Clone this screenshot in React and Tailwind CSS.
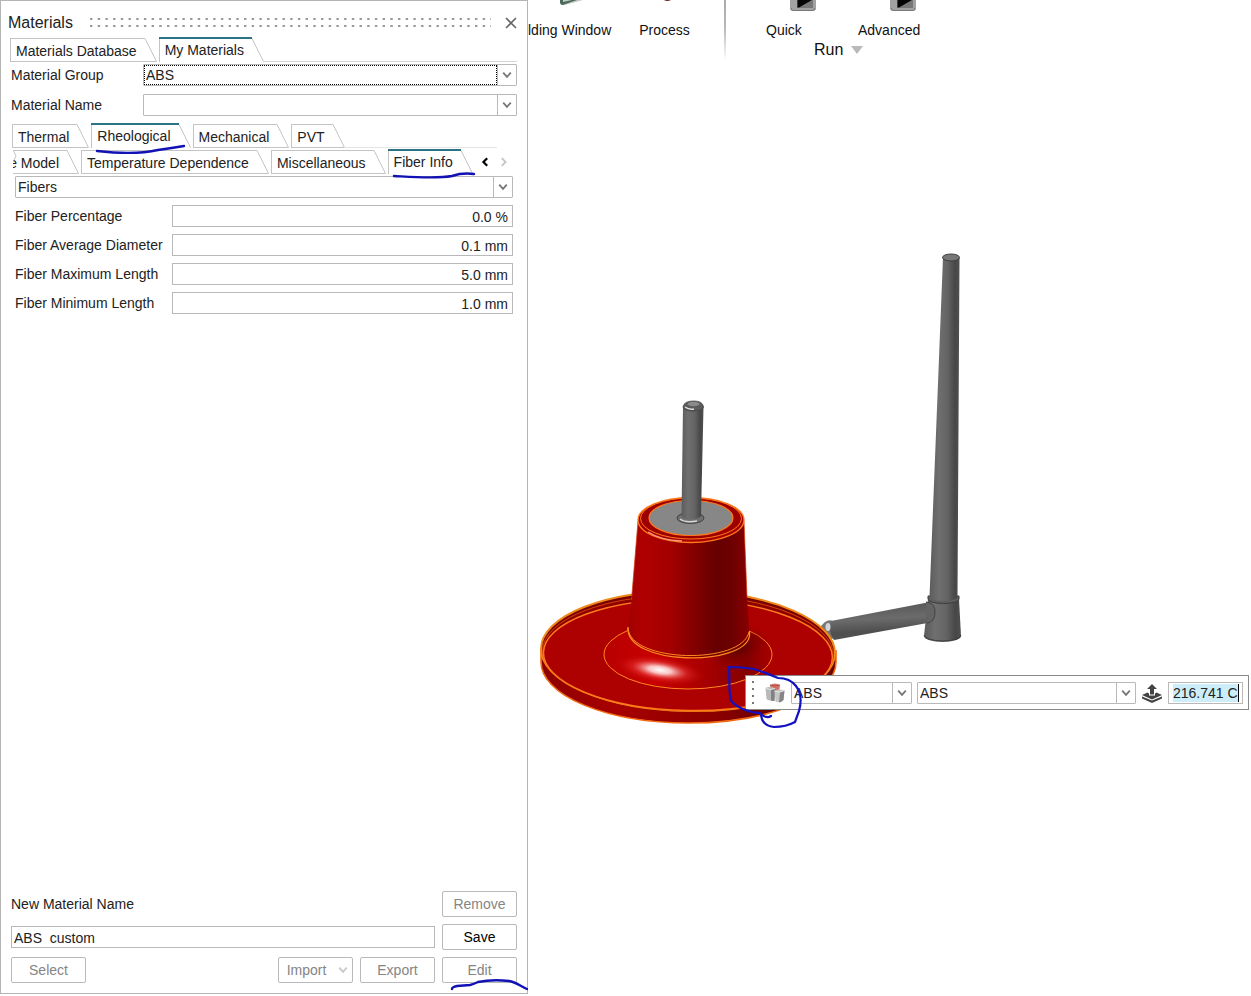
import React from 'react';
import clsx from 'clsx';

const Chevron = ({ className }) => (
  <svg viewBox="0 0 10 8" className={clsx('w-[10px] h-2', className)} fill="none" stroke="currentColor" strokeWidth="1.8">
    <path d="M1.2 1.6 L5 5.8 L8.8 1.6" />
  </svg>
);

const Combo = ({ id, label, value, focused, className }) => (
  <div className={clsx('flex h-[22px] border border-[#b9b9b9] rounded-[1px] bg-white', className)}>
    <select
      id={id}
      aria-label={label}
      defaultValue={value}
      className={clsx(
        'appearance-none flex-1 min-w-0 h-full outline-none bg-white',
        focused ? 'border border-dotted border-black pl-px leading-[18px]' : 'pl-[2px] leading-5'
      )}
    >
      <option>{value}</option>
    </select>
    <span className="w-[19px] border-l border-[#b9b9b9] flex items-center justify-center text-[#777]">
      <Chevron />
    </span>
  </div>
);

const Tab = ({ label, active, cut }) => (
  <button role="tab" aria-selected={!!active} className="flex items-end h-[25px] mr-[2px] whitespace-nowrap">
    <span
      className={clsx(
        'block pr-2',
        active ? 'h-[25px] border-t-2 border-[#2a7486]' : 'h-6 leading-[25px] border-t border-b border-[#c4c4c4]'
      )}
    >
      <span
        className={clsx(
          'block h-full',
          active && 'leading-[22px]',
          !cut && 'pl-[5px] border-l border-[#c4c4c4]'
        )}
      >
        {label}
      </span>
    </span>
    <svg viewBox="0 0 12 24" className="w-3 h-6" fill="none" stroke="#c4c4c4">
      <path d={active ? 'M0 0.5 L11.5 23.5' : 'M0 0.5 L11.5 23.5 H0'} />
    </svg>
  </button>
);

const NumberField = ({ id, label, value }) => (
  <div className="flex items-center h-[22px]">
    <label htmlFor={id} className="w-[157px] shrink-0 whitespace-nowrap">{label}</label>
    <input
      id={id}
      defaultValue={value}
      className="flex-1 min-w-0 h-[22px] border border-[#b9b9b9] text-right px-1 pt-[2px] outline-none"
    />
  </div>
);

const PanelButton = ({ children, disabled }) => (
  <button
    disabled={disabled}
    className={clsx(
      'w-[75px] h-[26px] border border-[#b9b9b9] rounded-[2px] bg-white flex items-center justify-center',
      disabled ? 'text-[#858585]' : 'text-black'
    )}
  >
    {children}
  </button>
);

const fiberFields = [
  { id: 'fiber-percentage', label: 'Fiber Percentage', value: '0.0 %' },
  { id: 'fiber-diameter', label: 'Fiber Average Diameter', value: '0.1 mm' },
  { id: 'fiber-max', label: 'Fiber Maximum Length', value: '5.0 mm' },
  { id: 'fiber-min', label: 'Fiber Minimum Length', value: '1.0 mm' },
];

const MaterialsPanel = () => (
  <aside className="relative w-[528px] shrink-0 flex flex-col border border-[#b5b5b5] px-[10px] pb-[10px] bg-white">
    <header className="flex items-center h-[36px] pt-[7px] -ml-[3px]">
      <h1 className="text-base w-[82px]">Materials</h1>
      <svg className="w-[401px] h-[10px]" stroke="#999" strokeWidth="2" strokeDasharray="2.4 5.3">
        <line x1="0" y1="1" x2="401" y2="1" />
        <line x1="0" y1="8" x2="401" y2="8" />
      </svg>
      <button aria-label="Close" className="ml-auto">
        <svg viewBox="0 0 12 12" className="w-3 h-3" stroke="#666" strokeWidth="1.6">
          <path d="M1 1 L11 11 M11 1 L1 11" />
        </svg>
      </button>
    </header>

    <div role="tablist" className="flex -ml-px">
      <Tab label="Materials Database" />
      <Tab label="My Materials" active />
      <span className="flex-1 -ml-[3px] border-b border-[#d8d8d8]" />
    </div>

    <div className="flex items-center mt-[2px]">
      <label htmlFor="material-group" className="w-[132px]">Material Group</label>
      <Combo id="material-group" value="ABS" focused className="flex-1" />
    </div>
    <div className="flex items-center mt-2">
      <label htmlFor="material-name" className="w-[132px]">Material Name</label>
      <Combo id="material-name" value="" className="flex-1" />
    </div>

    <div role="tablist" className="flex mt-[7px] ml-px mr-5">
      <Tab label="Thermal" />
      <Tab label="Rheological" active />
      <Tab label="Mechanical" />
      <Tab label="PVT" />
      <span className="flex-1 -ml-[3px] border-b border-[#e4e4e4]" />
    </div>
    <div className="relative flex items-center mt-px ml-[2px]">
      <div role="tablist" className="flex overflow-hidden">
        <div className="w-[68px] flex justify-end overflow-hidden">
          <Tab label="e Model" cut />
        </div>
        <Tab label="Temperature Dependence" />
        <Tab label="Miscellaneous" />
        <Tab label="Fiber Info" active />
      </div>
      {/* torn edge of the scrolled tab strip */}
      <svg viewBox="0 0 4 24" className="absolute left-0 top-px w-1 h-6" fill="none" stroke="#c4c4c4">
        <path d="M0 0 L3 6 L0 12" />
      </svg>
      <button aria-label="Scroll tabs left" className="ml-[6px] text-black">
        <svg viewBox="0 0 8 10" className="w-2 h-[10px]" fill="none" stroke="currentColor" strokeWidth="2.2">
          <path d="M6.2 1.2 L2.4 5 L6.2 8.8" />
        </svg>
      </button>
      <button aria-label="Scroll tabs right" className="ml-[11px] text-[#c4c4c4]">
        <svg viewBox="0 0 8 10" className="w-2 h-[10px]" fill="none" stroke="currentColor" strokeWidth="1.8">
          <path d="M1.8 1.2 L5.6 5 L1.8 8.8" />
        </svg>
      </button>
    </div>

    <div className="mx-1 mt-[2px]">
      <Combo label="Fiber model" value="Fibers" />
      <div className="flex flex-col gap-[7px] mt-[7px]">
        {fiberFields.map((field) => (
          <NumberField key={field.id} {...field} />
        ))}
      </div>
    </div>

    <footer className="mt-auto flex flex-col gap-[7px]">
      <div className="flex items-center justify-between">
        <label htmlFor="new-name">New Material Name</label>
        <PanelButton disabled>Remove</PanelButton>
      </div>
      <div className="flex items-center gap-[7px]">
        <input
          id="new-name"
          defaultValue="ABS&nbsp; custom"
          className="flex-1 min-w-0 h-[22px] border border-[#b9b9b9] px-[2px] pt-[2px] outline-none"
        />
        <PanelButton>Save</PanelButton>
      </div>
      <div className="flex gap-[7px]">
        <PanelButton disabled>Select</PanelButton>
        <span className="flex-1" />
        <PanelButton disabled>
          Import
          <Chevron className="ml-3 -mr-1 text-[#c8c8c8]" />
        </PanelButton>
        <PanelButton disabled>Export</PanelButton>
        <PanelButton disabled>Edit</PanelButton>
      </div>
    </footer>

    {/* pen marks */}
    <svg
      className="absolute -left-px -top-px w-[528px] h-[200px] pointer-events-none"
      fill="none" stroke="#1212b4" strokeWidth="2.4" strokeLinecap="round"
    >
      <path d="M97 151 C115 153 140 154 158 150 Q172 148 184 146" />
      <path d="M394 176 C412 177 436 179 452 176 C461 173 466 173 474 174" />
    </svg>
    <svg
      viewBox="450 975 78 19"
      className="absolute -right-px -bottom-px w-[78px] h-[19px] pointer-events-none"
      fill="none" stroke="#1212b4" strokeWidth="2.4" strokeLinecap="round"
    >
      <path d="M452 989 Q452 987 457 986 L470 985 Q474 984 478 982 C488 980 500 980 509 981 C516 982 520 986 527 989" />
    </svg>
  </aside>
);

const RunIcon = ({ className }) => (
  <svg viewBox="0 0 26 12" className={clsx('w-[26px] h-3', className)}>
    <path d="M0 0 H26 V8 Q26 11 23 11 H3 Q0 11 0 8 Z" fill="#a2a2a2" />
    <path d="M1 8 Q1 10.500 4 10.500 H22 Q25 10.500 25 8" fill="none" stroke="#777" />
    <path d="M7 0 H23 V8 H7 Z" fill="#777" />
    <path d="M7.500 0 H22 L9 7.500 H7.500 Z" fill="#050505" />
  </svg>
);

const Ribbon = () => (
  <nav className="flex h-[60px] text-[#111]">
    <div className="flex items-start w-[196px] gap-7">
      <button className="flex flex-col items-center whitespace-nowrap">
        <svg viewBox="0 0 30 12" className="w-[30px] h-3">
          <path d="M7 0 H28 L10 5 Q7 5 7 3 Z" fill="#c5cbc8" />
          <path d="M5 0 H8 V2 L17 0 H22 L9 4.500 Q6 6 5 3 Z" fill="#4a6a5c" />
        </svg>
        <span className="mt-2 leading-5">lding Window</span>
      </button>
      <button className="flex flex-col items-center">
        <svg viewBox="0 0 12 12" className="w-3 h-3">
          <path d="M5 0 H12 Q8 2 5 0 Z" fill="#702020" />
        </svg>
        <span className="mt-2 leading-5">Process</span>
      </button>
    </div>
    <span className="w-[2px] bg-gradient-to-b from-[#aaa] via-[#bbb] to-white" />
    <div className="pl-10">
      <div className="flex gap-[42px]">
        <button className="flex flex-col items-start w-[50px]">
          <RunIcon className="self-end" />
          <span className="mt-2 leading-5">Quick</span>
        </button>
        <button className="flex flex-col items-start">
          <RunIcon className="self-end mr-1" />
          <span className="mt-2 leading-5">Advanced</span>
        </button>
      </div>
      <button className="flex items-center gap-2 ml-12 text-base leading-5">
        Run
        <svg viewBox="0 0 12 8" className="w-3 h-2" fill="#b9b9b9">
          <path d="M0 0 H12 L6 8 Z" />
        </svg>
      </button>
    </div>
  </nav>
);

const PartModel = () => (
  <svg viewBox="528 60 723 760" className="block w-[723px] h-[760px]">
    <defs>
      <linearGradient id="cone">
        <stop offset="0" stopColor="#a00000" />
        <stop offset="0.12" stopColor="#b00000" />
        <stop offset="0.35" stopColor="#a30000" />
        <stop offset="0.55" stopColor="#820000" />
        <stop offset="0.72" stopColor="#680000" />
        <stop offset="0.85" stopColor="#6c0000" />
        <stop offset="1" stopColor="#8a0000" />
      </linearGradient>
      <linearGradient id="side">
        <stop offset="0" stopColor="#8d0000" />
        <stop offset="0.25" stopColor="#a80000" />
        <stop offset="0.6" stopColor="#8a0000" />
        <stop offset="0.8" stopColor="#680000" />
        <stop offset="1" stopColor="#6a0000" />
      </linearGradient>
      <linearGradient id="fillet">
        <stop offset="0" stopColor="#b80000" />
        <stop offset="0.3" stopColor="#c80000" />
        <stop offset="0.6" stopColor="#a80000" />
        <stop offset="0.85" stopColor="#850000" />
        <stop offset="1" stopColor="#a80000" />
      </linearGradient>
      <radialGradient id="shine">
        <stop offset="0" stopColor="#fff" />
        <stop offset="0.25" stopColor="#ffd8d8" stopOpacity="0.9" />
        <stop offset="0.6" stopColor="#f04040" stopOpacity="0.45" />
        <stop offset="1" stopColor="#c40000" stopOpacity="0" />
      </radialGradient>
      <radialGradient id="shade">
        <stop offset="0" stopColor="#500000" stopOpacity="0.85" />
        <stop offset="1" stopColor="#800000" stopOpacity="0" />
      </radialGradient>
      <linearGradient id="steel">
        <stop offset="0" stopColor="#5c5c5c" />
        <stop offset="0.3" stopColor="#6f6f6f" />
        <stop offset="0.6" stopColor="#646464" />
        <stop offset="0.85" stopColor="#474747" />
        <stop offset="1" stopColor="#505050" />
      </linearGradient>
      <linearGradient id="runner" x1="0" y1="0" x2="0.15" y2="1">
        <stop offset="0.2" stopColor="#5c5c5c" />
        <stop offset="0.5" stopColor="#6b6b6b" />
        <stop offset="0.8" stopColor="#505050" />
      </linearGradient>
    </defs>

    {/* runner and sprue */}
    <path d="M820 628 Q826 618 833 621 L836 638 L826 640 Z" fill="#777" />
    <path d="M831 621 L930 602 L933 622 L834 640 Q827 630 831 621 Z" fill="url(#runner)" />
    <ellipse cx="828" cy="627" rx="2.500" ry="4" fill="#d2d6da" />
    <path d="M928 599 L924 636 A18.500 6 0 0 0 961 636 L959 599 Z" fill="url(#steel)" />
    <path d="M924 635 A18.500 6 0 0 0 961 635" fill="none" stroke="#3e3e3e" />
    <path d="M928 596 V599 A15.500 4.500 0 0 0 959 599 V596 Z" fill="#5f5f5f" stroke="#3c3c3c" />
    <path d="M943 257 L929.500 597 A14 4 0 0 0 957.500 597 L959.500 257 Z" fill="url(#steel)" />
    <path d="M926 602 Q936 603 935 613 Q935 622 927 623" fill="#646464" stroke="#444" />
    <ellipse cx="951" cy="257.500" rx="8.500" ry="3.500" fill="#777" stroke="#3f3f3f" />

    {/* disc */}
    <path d="M541 648 V662 A147.500 61 0 0 0 836 662 V652 Z" fill="url(#side)" />
    <path d="M541 648 V662 A147.500 61 0 0 0 836 662 V650" fill="none" stroke="#f26a12" strokeWidth="1.600" />
    <g transform="rotate(1 688 651)">
      <ellipse cx="688" cy="651" rx="147" ry="60" fill="#790000" stroke="#ef8a18" strokeWidth="2" />
      <ellipse cx="688" cy="653" rx="145.500" ry="58" fill="#8c0000" stroke="#e8500c" strokeWidth="0.800" />
      <ellipse cx="688" cy="655" rx="144.500" ry="55.500" fill="#ad0000" stroke="#ff7a1c" strokeWidth="1.500" />
    </g>
    <ellipse cx="688" cy="654.500" rx="84" ry="34.500" fill="url(#fillet)" stroke="#ff8a20" />
    <ellipse cx="738" cy="648" rx="32" ry="18" fill="url(#shade)" transform="rotate(-25 738 648)" />
    <ellipse cx="660" cy="670" rx="46" ry="14" fill="url(#shine)" transform="rotate(9 660 670)" />

    {/* hub */}
    <path d="M638 521 L631.500 600 Q630 620 628 630 C630 667 746 668 749.500 632 Q748 615 747 597 L744 521 Z" fill="url(#cone)" />
    <path d="M628 627 C625 666 744 667 749.500 636 V631" fill="none" stroke="#ff8a20" strokeWidth="1.300" />
    <path d="M628 628 C630 663 742 665 749 632" fill="none" stroke="#ff8a20" />
    <path d="M638 521 L631.500 600 M744 521 L747 597" stroke="#d03c08" strokeWidth="0.700" />
    <ellipse cx="691" cy="520" rx="53" ry="22.500" fill="#a80000" stroke="#ff7a1c" strokeWidth="1.300" />
    <ellipse cx="691" cy="518.500" rx="50.500" ry="20.500" fill="#9c0000" stroke="#ff7a1c" />
    <path d="M648 532 Q660 540 682 541" stroke="#ff9a80" strokeWidth="1.500" fill="none" />
    <ellipse cx="691" cy="518" rx="42" ry="17.500" fill="#878787" stroke="#ff7a1c" strokeWidth="1.200" />

    {/* core pin */}
    <ellipse cx="690.500" cy="518" rx="13.500" ry="5.500" fill="#6f6f6f" stroke="#444" />
    <path d="M680 519 Q685 523 697 521" stroke="#d5d5d5" strokeWidth="1.500" fill="none" />
    <path d="M683 407 L681.500 516 A10 4 0 0 0 701 516 L703.500 407 Z" fill="url(#steel)" />
    <path d="M683 407 Q684 401 693.500 401 Q703 401 703.500 407 A10 4 0 0 1 683 407 Z" fill="#5b5b5b" stroke="#444" strokeWidth="0.800" />
    <ellipse cx="693.500" cy="404" rx="6" ry="2.200" fill="#8a8a8a" />
    <path d="M685 407 Q689 410 694 409" stroke="#ddd" strokeWidth="1.500" fill="none" />
  </svg>
);

const MaterialIcon = () => (
  <svg viewBox="0 0 20 20" className="w-5 h-5">
    <path d="M5 2 Q10 -1 15 2 L14 10 H6 Z" fill="#d47068" />
    <path d="M5 2 Q10 4 15 2" fill="none" stroke="#b04c48" />
    <path d="M0.500 5 Q5 3 10 5.500 L9.500 18 Q4 18 1.500 16 Z" fill="#b9b9b9" />
    <path d="M6 6.500 L10 5.500 L9.500 18 L6 17.500 Z" fill="#808080" />
    <path d="M0.500 5 Q5 8 10 5.500" fill="none" stroke="#e4e4e4" />
    <path d="M9.500 8 Q14 5.500 19.500 7.500 L18.500 17 Q14 20.500 10.500 18.500 Z" fill="#c6c6c6" />
    <path d="M15 9.500 L19.500 7.500 L18.500 17 Q16 19.500 14 19.500 Z" fill="#858585" />
    <path d="M9.500 8 Q14 10.500 19.500 7.500" fill="none" stroke="#e4e4e4" />
  </svg>
);

const EjectIcon = () => (
  <svg viewBox="0 0 20 20" className="w-5 h-5" fill="#444">
    <path d="M10 1 L15 6 H12 V11.500 H8 V6 H5 Z" />
    <path d="M0 12 L5.500 9.500 L7 10.500 V12.500 H13 V10.500 L14.500 9.500 L20 12 L10 16.500 Z" />
    <path d="M0 13.500 L10 17.500 L20 13.500 V15.500 L10 20 L0 15.500 Z" />
  </svg>
);

const FloatingToolbar = () => (
  <div className="absolute left-[217px] top-[615px] flex items-center w-[504px] h-[35px] border border-[#8a8a8a] bg-white pl-[6px] pr-[5px]">
    <svg viewBox="0 0 2 24" className="w-[2px] h-6" fill="#777">
      <path d="M0 0 h2 v2 h-2 Z M0 7 h2 v2 h-2 Z M0 14 h2 v2 h-2 Z M0 21 h2 v2 h-2 Z" />
    </svg>
    <button aria-label="Material" className="ml-[11px] mr-[6px]">
      <MaterialIcon />
    </button>
    <Combo label="Material group" value="ABS" className="w-[121px]" />
    <Combo label="Material" value="ABS" className="flex-1 ml-[5px]" />
    <button aria-label="Ejection temperature" className="mx-[6px]">
      <EjectIcon />
    </button>
    <div className="w-[75px] h-[22px] border border-[#b9b9b9] pl-1 pr-[3px] py-px">
      <input
        aria-label="Temperature"
        defaultValue="216.741 C"
        className="block w-full h-[18px] bg-[#cdeef8] border-r border-black outline-none"
      />
    </div>
  </div>
);

export default function App() {
  return (
    <div className="flex h-screen pb-[2px] overflow-hidden bg-white text-sm text-[#222] font-['Liberation_Sans',Arial,sans-serif]">
      <MaterialsPanel />
      <main className="flex-1 min-w-0 overflow-hidden">
        <Ribbon />
        <section className="relative">
          <PartModel />
          <FloatingToolbar />
          <svg
            viewBox="724 660 84 74"
            className="absolute left-[196px] top-[600px] w-[84px] h-[74px] pointer-events-none"
            fill="none" stroke="#1212c0" strokeWidth="2.2" strokeLinecap="round" strokeLinejoin="round"
          >
            <path d="M771 716 Q767 719 761 714 L759 713 C748 712 738 708 732 702 C728 697 730 679 729 667 Q742 667 754 669 Q766 673 778 678 Q790 678 796 686 C802 694 801 704 799 711 L795 722 Q786 727 774 727 C764 726 761 720 761 713" />
          </svg>
        </section>
      </main>
    </div>
  );
}
